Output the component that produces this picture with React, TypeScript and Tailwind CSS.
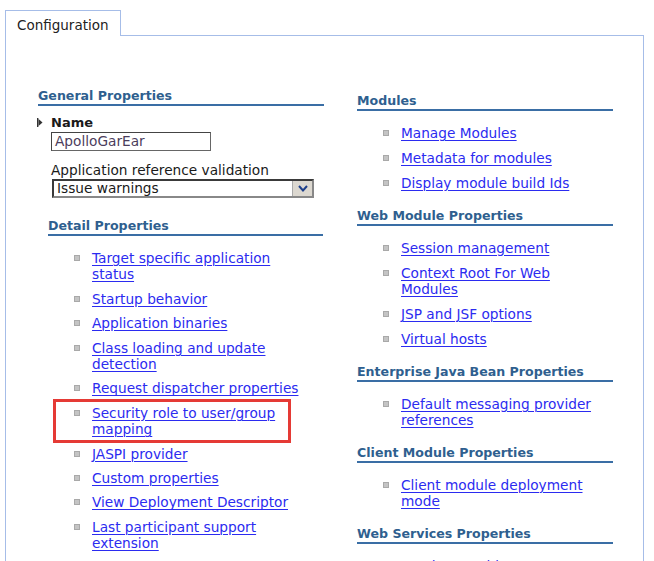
import React from 'react';

const font = "font-['DejaVu_Sans',Verdana,sans-serif]";

type Item = string[];

const LEFT_ITEMS: Item[] = [
  ['Target specific application', 'status'],
  ['Startup behavior'],
  ['Application binaries'],
  ['Class loading and update', 'detection'],
  ['Request dispatcher properties'],
  ['Security role to user/group', 'mapping'],
  ['JASPI provider'],
  ['Custom properties'],
  ['View Deployment Descriptor'],
  ['Last participant support', 'extension'],
];

const RIGHT_SECTIONS: { title: string; items: Item[] }[] = [
  { title: 'Modules', items: [['Manage Modules'], ['Metadata for modules'], ['Display module build Ids']] },
  {
    title: 'Web Module Properties',
    items: [['Session management'], ['Context Root For Web', 'Modules'], ['JSP and JSF options'], ['Virtual hosts']],
  },
  { title: 'Enterprise Java Bean Properties', items: [['Default messaging provider', 'references']] },
  { title: 'Client Module Properties', items: [['Client module deployment', 'mode']] },
  { title: 'Web Services Properties', items: [['Service providers']] },
];

const Heading = ({ children }: { children: React.ReactNode }) => (
  <div className="border-b-2 border-[#3a6ea5] text-[12.6px] leading-4 font-bold text-[#2f5f8f]">{children}</div>
);

const Bullet = () => (
  <span className="mt-[5px] w-[6px] h-[6px] shrink-0 bg-[#c4c4c4] border border-[#a9a9a9]" />
);

const LinkItem = ({ lines }: { lines: Item }) => (
  <div className="flex items-start gap-[12px]">
    <Bullet />
    <a href="#" className="text-[#2b2bf0] underline underline-offset-2 decoration-1 leading-[16.4px]">
      {lines.map((l, i) => (
        <div key={i}>{l}</div>
      ))}
    </a>
  </div>
);

export default function App() {
  return (
    <div className={`w-[654px] h-[561px] overflow-hidden bg-white pt-[10px] pl-[5px] pr-[10px] text-[13.7px] text-[#1a1a1a] ${font}`}>
      {/* tabs */}
      <div className="flex h-[26px]">
        <div className="w-[116px] border border-b-0 border-[#a6bde8] pl-[11px] pt-[6px] leading-4 text-[13.5px] text-[#222]">
          Configuration
        </div>
        <div className="flex-1 border-b border-[#a6bde8]" />
      </div>

      <div className="h-[600px] border-l border-r border-[#a6bde8] flex pl-[32px]">
        {/* left column */}
        <div className="w-[286px] pt-[52px]">
          <Heading>General Properties</Heading>
          <div className="pl-[10px]">
            <div className="relative mt-[9px] pl-[3px] leading-4 font-bold text-[13px]">
              <svg className="absolute left-[-11px] top-[3px]" width="6" height="9" viewBox="0 0 6 9">
                <rect x="0" y="0" width="1.4" height="9" fill="#333" />
                <path d="M1.5 1 L5.5 4.5 L1.5 8 Z" fill="#333" />
              </svg>
              Name
            </div>
            <div className="mt-[1px] ml-[3px] w-[160px] h-[19px] border border-[#666] border-t-[#444] border-l-[#444] pl-[3px] leading-[17px] text-[#4b3d5c]">
              ApolloGarEar
            </div>
            <div className="mt-[11px] pl-[3px] leading-4">Application reference validation</div>
            <div className="mt-[1px] ml-[4px] w-[262px] h-[19px] flex border-2 border-[#3a3a3a] border-b-[#888] border-r-[#888] bg-white">
              <div className="flex-1 pl-[3px] leading-[15px]">Issue warnings</div>
              <div className="w-[20px] h-[15px] bg-[#dcd8d0] border-l border-[#aaa] flex items-center justify-center">
                <svg width="10" height="7" viewBox="0 0 10 7">
                  <path d="M1 1 L5 5.5 L9 1" stroke="#1d3f8a" strokeWidth="2" fill="none" />
                </svg>
              </div>
            </div>
            <div className="mt-[20px] w-[275px]">
              <Heading>Detail Properties</Heading>
            </div>
            <div className="pl-[26px] mt-[14px] flex flex-col gap-[8px]">
              {LEFT_ITEMS.map((it, i) => (
                <div key={i} className={i === 5 ? 'relative' : ''}>
                  {i === 5 && (
                    <div className="absolute left-[-21px] top-[-6px] w-[238px] h-[44px] border-[3px] border-[#e53a35]" />
                  )}
                  <LinkItem lines={it} />
                </div>
              ))}
            </div>
          </div>
        </div>

        {/* right column */}
        <div className="ml-[33px] w-[256px] pt-[57px]">
          {RIGHT_SECTIONS.map((s, i) => (
            <div key={i} className={i > 0 ? 'mt-[16.5px]' : ''}>
              <Heading>{s.title}</Heading>
              <div className="pl-[26px] mt-[14px] flex flex-col gap-[8.5px]">
                {s.items.map((it, j) => (
                  <LinkItem key={j} lines={it} />
                ))}
              </div>
            </div>
          ))}
        </div>
      </div>
    </div>
  );
}
